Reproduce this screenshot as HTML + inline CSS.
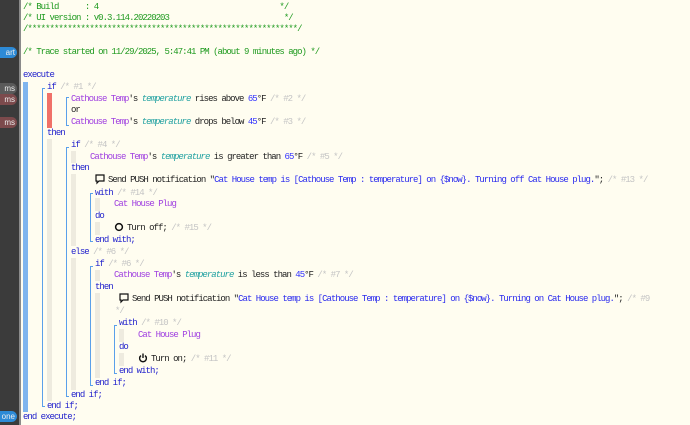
<!DOCTYPE html>
<html><head><meta charset="utf-8"><style>
html,body{margin:0;padding:0;}
body{width:690px;height:425px;overflow:hidden;background:#fffdf0;position:relative;font-family:"Liberation Mono",monospace;font-size:9px;letter-spacing:-0.98px;}
#side{position:absolute;left:0;top:0;width:19px;height:425px;background:#3b3b3b;border-right:2px solid #8a8a8a;}
.pill{position:absolute;height:11px;border-radius:0 6px 6px 0;color:#eee;font-family:"Liberation Sans",sans-serif;font-size:8px;letter-spacing:0;line-height:11px;text-align:right;padding-right:2px;box-sizing:border-box;}
.l{position:absolute;white-space:pre;line-height:11px;height:11px;color:#222;}
.k{color:#2222cc}
.g{color:#1f9a1f}
.c{color:#c4c4c4}
.p{color:#a040e0}
.t{color:#1fa0a0;font-style:italic}
.n{color:#3333ff}
.s{color:#2a2aee}
.bar{position:absolute;}
.br{position:absolute;border-left:1px solid #5aa0ea;border-top:1px solid #5aa0ea;border-bottom:1px solid #5aa0ea;width:2px;}
</style></head><body>
<div id="side">
<div class="pill" style="top:47px;width:17px;background:#2d8ad6;">art</div>
<div class="pill" style="top:83px;width:17px;background:#5a5a5a;">ms</div>
<div class="pill" style="top:94px;width:17px;background:#7c4a4c;">ms</div>
<div class="pill" style="top:117px;width:17px;background:#7c4a4c;">ms</div>
<div class="pill" style="top:411px;width:17px;background:#2d8ad6;">one</div>
</div>

<div class="bar" style="left:23px;top:82px;width:5px;height:330px;background:#7fb5ee"></div>
<div class="bar" style="left:47px;top:93px;width:5px;height:35px;background:#f07168"></div>
<div class="bar" style="left:47px;top:139px;width:5px;height:262px;background:#eeebdf"></div>
<div class="bar" style="left:71px;top:151px;width:5px;height:12px;background:#eeebdf"></div>
<div class="bar" style="left:71px;top:174px;width:5px;height:72px;background:#eeebdf"></div>
<div class="bar" style="left:71px;top:258px;width:5px;height:132px;background:#eeebdf"></div>
<div class="bar" style="left:95px;top:198px;width:5px;height:13px;background:#eeebdf"></div>
<div class="bar" style="left:95px;top:222px;width:5px;height:13px;background:#eeebdf"></div>
<div class="bar" style="left:95px;top:270px;width:5px;height:11px;background:#eeebdf"></div>
<div class="bar" style="left:95px;top:293px;width:5px;height:85px;background:#eeebdf"></div>
<div class="bar" style="left:119px;top:329px;width:5px;height:13px;background:#eeebdf"></div>
<div class="bar" style="left:119px;top:353px;width:5px;height:13px;background:#eeebdf"></div>

<div class="br" style="left:42px;top:88px;height:317px"></div>
<div class="br" style="left:66px;top:97px;height:27px"></div>
<div class="br" style="left:66px;top:147px;height:248px"></div>
<div class="br" style="left:90px;top:193px;height:47px"></div>
<div class="br" style="left:90px;top:266px;height:118px"></div>
<div class="br" style="left:114px;top:325px;height:47px"></div>

<div class="l g" style="left:23px;top:2px">/* Build      : 4                                         */</div>
<div class="l g" style="left:23px;top:13px">/* UI version : v0.3.114.20220203                          */</div>
<div class="l g" style="left:23px;top:24px">/*************************************************************/</div>
<div class="l g" style="left:23px;top:47px">/* Trace started on 11/29/2025, 5:47:41 PM (about 9 minutes ago) */</div>

<div class="l k" style="left:23px;top:70px">execute</div>
<div class="l" style="left:47px;top:82px"><span class="k">if</span> <span class="c">/* #1 */</span></div>
<div class="l" style="left:71px;top:94px"><span class="p">Cathouse Temp</span>'s <span class="t">temperature</span> rises above <span class="n">65</span>°F <span class="c">/* #2 */</span></div>
<div class="l" style="left:71px;top:105px">or</div>
<div class="l" style="left:71px;top:117px"><span class="p">Cathouse Temp</span>'s <span class="t">temperature</span> drops below <span class="n">45</span>°F <span class="c">/* #3 */</span></div>
<div class="l k" style="left:47px;top:128px">then</div>
<div class="l" style="left:71px;top:140px"><span class="k">if</span> <span class="c">/* #4 */</span></div>
<div class="l" style="left:90px;top:152px"><span class="p">Cathouse Temp</span>'s <span class="t">temperature</span> is greater than <span class="n">65</span>°F <span class="c">/* #5 */</span></div>
<div class="l k" style="left:71px;top:163px">then</div>
<svg style="position:absolute;left:95px;top:174px" width="10" height="11" viewBox="0 0 10 11"><path d="M1 1h8v6H4l-2 2V7H1z" fill="none" stroke="#111" stroke-width="1.2"/></svg>
<div class="l" style="left:108px;top:175px">Send PUSH notification "<span class="s">Cat House temp is [Cathouse Temp : temperature] on {$now}. Turning off Cat House plug.</span>"; <span class="c">/* #13 */</span></div>
<div class="l" style="left:95px;top:188px"><span class="k">with</span> <span class="c">/* #14 */</span></div>
<div class="l p" style="left:114px;top:199px">Cat House Plug</div>
<div class="l k" style="left:95px;top:211px">do</div>
<svg style="position:absolute;left:114px;top:222px" width="10" height="10" viewBox="0 0 10 10"><circle cx="5" cy="5" r="3.4" fill="none" stroke="#111" stroke-width="1.5"/></svg>
<div class="l" style="left:127px;top:223px">Turn off; <span class="c">/* #15 */</span></div>
<div class="l k" style="left:95px;top:235px">end with;</div>
<div class="l" style="left:71px;top:247px"><span class="k">else</span> <span class="c">/* #6 */</span></div>
<div class="l" style="left:95px;top:259px"><span class="k">if</span> <span class="c">/* #6 */</span></div>
<div class="l" style="left:114px;top:270px"><span class="p">Cathouse Temp</span>'s <span class="t">temperature</span> is less than <span class="n">45</span>°F <span class="c">/* #7 */</span></div>
<div class="l k" style="left:95px;top:282px">then</div>
<svg style="position:absolute;left:119px;top:293px" width="10" height="11" viewBox="0 0 10 11"><path d="M1 1h8v6H4l-2 2V7H1z" fill="none" stroke="#111" stroke-width="1.2"/></svg>
<div class="l" style="left:132px;top:294px">Send PUSH notification "<span class="s">Cat House temp is [Cathouse Temp : temperature] on {$now}. Turning on Cat House plug.</span>"; <span class="c">/* #9</span></div>
<div class="l c" style="left:115px;top:306px">*/</div>
<div class="l" style="left:119px;top:318px"><span class="k">with</span> <span class="c">/* #10 */</span></div>
<div class="l p" style="left:138px;top:330px">Cat House Plug</div>
<div class="l k" style="left:119px;top:342px">do</div>
<svg style="position:absolute;left:138px;top:353px" width="10" height="10" viewBox="0 0 10 10"><path d="M3 2.6A3.4 3.4 0 1 0 7 2.6" fill="none" stroke="#111" stroke-width="1.4"/><path d="M5 0.5v4.5" stroke="#111" stroke-width="1.4"/></svg>
<div class="l" style="left:151px;top:354px">Turn on; <span class="c">/* #11 */</span></div>
<div class="l k" style="left:119px;top:366px">end with;</div>
<div class="l k" style="left:95px;top:378px">end if;</div>
<div class="l k" style="left:71px;top:390px">end if;</div>
<div class="l k" style="left:47px;top:401px">end if;</div>
<div class="l k" style="left:23px;top:412px">end execute;</div>
</body></html>
